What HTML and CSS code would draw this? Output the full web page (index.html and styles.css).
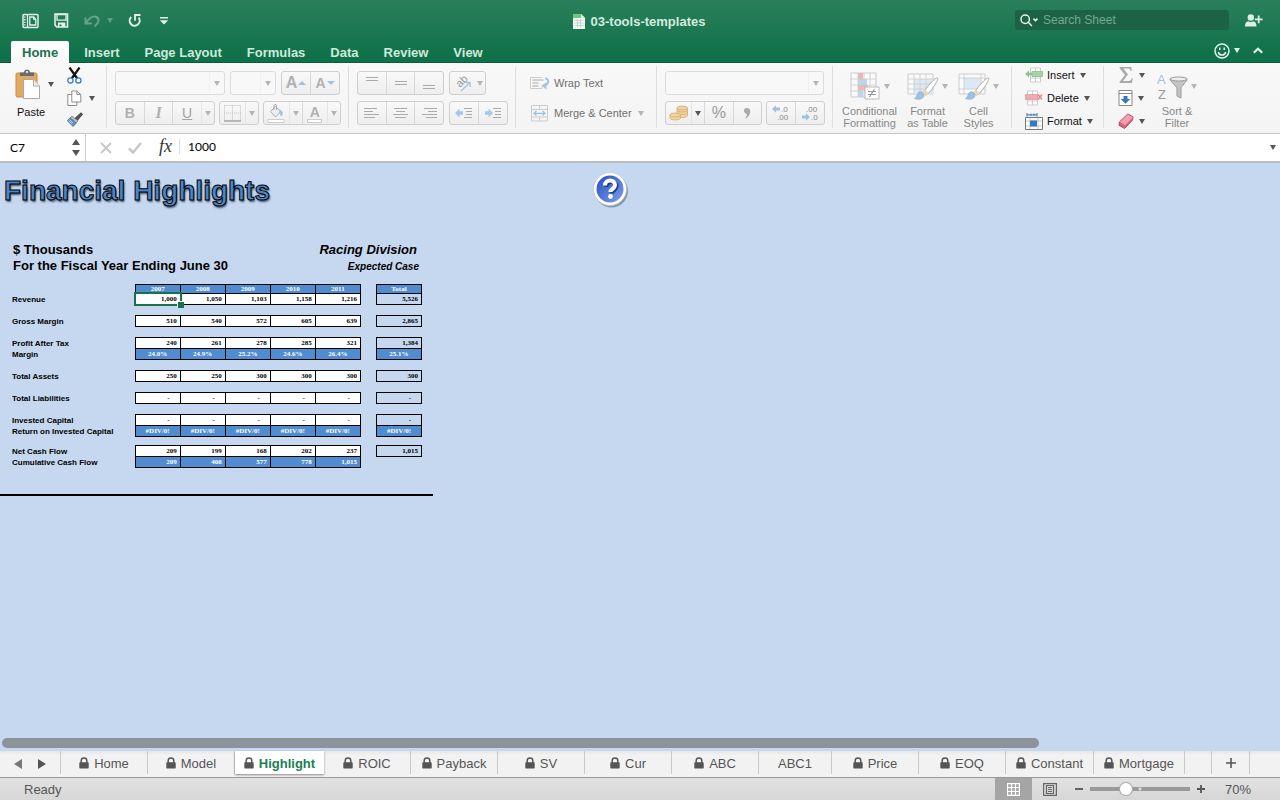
FILE: index.html
```html
<!DOCTYPE html>
<html lang="en">
<head>
<meta charset="utf-8">
<title>03-tools-templates</title>
<link rel="stylesheet" href="styles.css">
</head>
<body>
<header class="top">
  <div class="titlebar">
    <div class="quick">
      <button class="plain" aria-label="New from template"><svg width="17" height="16" viewBox="0 0 17 16" fill="none" stroke="#e3f1ea" stroke-width="1.5"><rect x="1" y="1.5" width="15" height="13" rx="1"/><path d="M5.500 2v12M7.800 12V4h4l2 2.300V12z" stroke-width="1.300"/><path d="M2.800 3.500v9" stroke-dasharray="1.300 1.300"/><path d="M11.500 4v2.600h2.500" stroke-width="1"/></svg></button>
      <button class="plain" aria-label="Save"><svg width="15" height="15" viewBox="0 0 15 15"><path d="M1 1h12.500v13H2.800L1 12.200z" fill="none" stroke="#e3f1ea" stroke-width="1.600"/><path d="M3 1.500h9v5.700H3z" fill="none" stroke="#e3f1ea" stroke-width="1.300"/><path d="M3.800 9.500h7.500V14H7.500v-2.500h-2V14H3.800z" fill="#e3f1ea"/></svg></button>
      <button class="plain undo" aria-label="Undo"><svg width="17" height="14" viewBox="0 0 17 14" fill="none" stroke="#66a487" stroke-width="2"><path d="M1.500 3.500v6h6.500M2 9C5 4.500 8.500 1.800 12 2.800c4 1.500 3 6-1.500 9.700"/></svg><span class="caret faint"></span></button>
      <button class="plain" aria-label="Repeat"><svg width="14" height="15" viewBox="0 0 14 15" fill="none" stroke="#e3f1ea" stroke-width="2"><path d="M3.300 4a5 5 0 1 0 7.300.6"/><path d="M7 7.800V2h5.500" stroke-width="1.800"/></svg></button>
      <button class="plain" aria-label="Customize toolbar"><svg width="10" height="8" viewBox="0 0 10 8" fill="#e3f1ea"><path d="M1 0h8v1.500H1zM.8 3.300h8.400L5 7.600z"/></svg></button>
    </div>
    <h1 class="doc"><svg width="12" height="15" viewBox="0 0 12 15"><path d="M0 0h8l4 4v11H0z" fill="#f4faf6"/><path d="M0 0h8l1 4H0z" fill="#72c487"/><path d="M8 0v4h4z" fill="#d6efe0"/><path d="M1.500 6.500h9M1.500 9h9M1.500 11.500h9M4.500 5v9M7.500 5v9" stroke="#b4c9bd" stroke-width=".7"/></svg>03-tools-templates</h1>
    <div class="right">
      <label class="search"><svg width="19" height="13" viewBox="0 0 19 13" fill="none" stroke="#e7f3ed" stroke-width="1.500"><circle cx="5.200" cy="5.200" r="4.200"/><path d="M8.300 8.300l3.600 3.700M13.500 4.600l2 2 2-2"/></svg><input type="text" placeholder="Search Sheet" aria-label="Search Sheet"></label>
      <button class="plain" aria-label="Share"><svg width="18" height="14" viewBox="0 0 18 14" fill="#dcefe5"><circle cx="5.800" cy="3.500" r="3.200"/><path d="M0 12.500c0-3.500 1-4.800 3.500-5.200l2.300 1 2.300-1c2.400.4 3.400 1.700 3.400 5.200z"/><path d="M12.800 1.500h1.800v3h3v1.800h-3v3h-1.800v-3h-3V4.500h3z"/></svg></button>
    </div>
  </div>
  <nav class="tabs">
    <button class="tab on">Home</button><button class="tab">Insert</button><button class="tab">Page Layout</button><button class="tab">Formulas</button><button class="tab">Data</button><button class="tab">Review</button><button class="tab">View</button>
    <div class="tabtools">
      <button class="plain" aria-label="Feedback"><svg width="16" height="16" viewBox="0 0 16 16" fill="none" stroke="#e3f1ea" stroke-width="1.500"><circle cx="8" cy="8" r="7"/><path d="M4.300 9c.7 4 6.700 4 7.400 0M5.800 4.500v2.500M10.200 4.500v2.500"/></svg><span class="caret light"></span></button>
      <button class="plain" aria-label="Collapse ribbon"><svg width="10" height="7" viewBox="0 0 10 7" fill="none" stroke="#e3f1ea" stroke-width="2.200"><path d="M.8 5.800L5 1.800l4.200 4"/></svg></button>
    </div>
  </nav>
</header>

<section class="ribbon" aria-label="Home">
  <div class="group clip">
    <button class="paste"><span class="pic"><svg width="26" height="31" viewBox="0 0 26 31"><rect x="1" y="4" width="21" height="24" rx="1.500" fill="#e2a95f" stroke="#c68d45"/><path d="M5 7V3.500h4C9-.5 15-.5 15 3.500h4V7z" fill="#6b6b6b"/><circle cx="12" cy="3" r="1.200" fill="#ddd"/><path d="M8.500 10.500h10l6 6.500v12.500h-16z" fill="#fff" stroke="#aaa"/><path d="M18.500 10.500V17h6" fill="#eee" stroke="#aaa"/></svg><span class="caret dark"></span></span>Paste</button>
    <div class="clipsmall">
      <button class="plain" aria-label="Cut"><svg width="15" height="17" viewBox="0 0 15 17" fill="none"><path d="M2.500.5l7.800 11M12.500.5L4.700 11.500" stroke="#111" stroke-width="2.200"/><circle cx="3.400" cy="13.400" r="2.600" stroke="#3b7fc4" stroke-width="1.300"/><circle cx="11.400" cy="13.400" r="2.600" stroke="#3b7fc4" stroke-width="1.300"/></svg></button>
      <button class="plain wide" aria-label="Copy"><svg width="15" height="17" viewBox="0 0 15 17" fill="#fff" stroke="#8d8d8d"><path d="M.8 4.500h9v11h-9z"/><path d="M4.800 1h5l4 3.500v7.500h-9z"/><path d="M9.800 1v3.500h4" fill="none"/></svg><span class="caret dark"></span></button>
      <button class="plain" aria-label="Format painter"><svg width="16" height="15" viewBox="0 0 16 15"><path d="M14 .8l1.500 1.400-5 6-2.400-2z" fill="#555" stroke="#444"/><path d="M5 4l6 5-2 2L3 6z" fill="#bbb" stroke="#777" stroke-width=".7"/><path d="M3 6l6.200 5.200L6 14.500.3 8.500z" fill="#5c93cf" stroke="#315e91" stroke-width=".7"/><path d="M2.500 7.500L6 11M1.500 8.500L5 12" stroke="#b7d2ed"/></svg></button>
    </div>
  </div>

  <div class="group stack">
    <div class="row">
      <span class="combo fontname"><select disabled aria-label="Font"><option></option></select><i class="caret"></i></span>
      <span class="combo fontsize"><select disabled aria-label="Font size"><option></option></select><i class="caret"></i></span>
      <span class="seg two"><button aria-label="Grow font" class="letter">A<i class="up"></i></button><button aria-label="Shrink font" class="letter small">A<i class="down"></i></button></span>
    </div>
    <div class="row">
      <span class="seg biu"><button class="letter small bold">B</button><button class="letter small ital">I</button><button class="letter small under">U</button><button class="drop" aria-label="Underline options"><i class="caret"></i></button></span>
      <span class="seg bord"><button aria-label="Borders"><svg width="17" height="17" viewBox="0 0 17 17" fill="none" stroke="#c0c0c0"><path d="M.5.500h16v15.500M.5.500V16M8.500.500V16M0 8h17" stroke-dasharray="1 1"/><path d="M0 16h17" stroke="#999" stroke-width="1.300"/></svg></button><button class="drop" aria-label="Border options"><i class="caret"></i></button></span>
      <span class="seg fill"><button aria-label="Fill color"><svg width="18" height="19" viewBox="0 0 18 19"><path d="M3.500 7.500l5-5 5.500 5-5.500 5.500z" fill="#eee" stroke="#aaa"/><path d="M7 6V1.500C7 0 9.500 0 9.500 1.500V6" fill="none" stroke="#aaa"/><path d="M13 6c3 1.500 2.500 4 1.300 6-1-1.500-1.800-3-1.300-6z" fill="#9cc3e4" stroke="#9cc3e4"/><path d="M1 15.500h16v3H1z" fill="#fff" stroke="#ccc"/></svg></button><button class="drop" aria-label="Fill options"><i class="caret"></i></button><button class="letter small fc">A<i class="bar"></i></button><button class="drop" aria-label="Font color options"><i class="caret"></i></button></span>
    </div>
  </div>

  <div class="group stack">
    <div class="row">
      <span class="seg three"><button aria-label="Align top"><svg class="ln" width="14" height="16" viewBox="0 0 14 16"><path d="M1 2.500h12M1 5.500h12"/></svg></button><button aria-label="Align middle"><svg class="ln" width="14" height="16" viewBox="0 0 14 16"><path d="M1 6.500h12M1 9.500h12"/></svg></button><button aria-label="Align bottom"><svg class="ln" width="14" height="16" viewBox="0 0 14 16"><path d="M1 10.500h12M1 13.500h12"/></svg></button></span>
      <span class="seg orient"><button aria-label="Orientation"><svg class="over" width="18" height="20" viewBox="0 0 18 20"><text x="0" y="0" transform="translate(7 15) rotate(-45)" class="ab">ab</text><path d="M8 18l9-8.500M12.500 9.500H17V14" fill="none" stroke="#9fc4e4" stroke-width="1.300"/></svg><i class="caret"></i></button></span>
    </div>
    <div class="row">
      <span class="seg three"><button aria-label="Align left"><svg class="ln" width="15" height="12" viewBox="0 0 15 12"><path d="M0 1.500h13M0 4.500h9M0 7.500h15M0 10.500h11"/></svg></button><button aria-label="Center"><svg class="ln" width="15" height="12" viewBox="0 0 15 12"><path d="M1 1.500h13M3 4.500h9M0 7.500h15M2 10.500h11"/></svg></button><button aria-label="Align right"><svg class="ln" width="15" height="12" viewBox="0 0 15 12"><path d="M2 1.500h13M6 4.500h9M0 7.500h15M4 10.500h11"/></svg></button></span>
      <span class="seg two"><button aria-label="Decrease indent"><svg class="ln" width="18" height="12" viewBox="0 0 18 12"><path d="M9 1.500h8M11 4.500h6M11 7.500h6M9 10.500h8"/><path class="blue" d="M0 6l4.500-4.500v2.700H8v3.600H4.500v2.700z"/></svg></button><button aria-label="Increase indent"><svg class="ln" width="18" height="12" viewBox="0 0 18 12"><path d="M9 1.500h8M11 4.500h6M11 7.500h6M9 10.500h8"/><path class="blue" d="M9 6L4.500 1.500v2.700H1v3.600h3.500v2.700z"/></svg></button></span>
    </div>
  </div>

  <div class="group stack texts">
    <button class="textbtn"><svg width="20" height="14" viewBox="0 0 20 14" fill="none" stroke="#aaa"><path d="M12 1.500H.5v11h11.500V10" stroke="#ccc"/><path d="M2.500 4h11M2.500 7h6M2.500 10h6"/><path d="M15 2.500c4.500 0 4.500 6-1 7" stroke="#a3c6e5" stroke-width="2"/><path d="M16.500 6v7.500L11.500 9.800z" fill="#a3c6e5" stroke="none"/></svg>Wrap Text</button>
    <button class="textbtn"><svg width="20" height="17" viewBox="0 0 20 17" fill="none" stroke="#ccc"><path d="M1.500.500h16v15.500h-16zM1.500 4.500h16M1.500 12h16M9.500.500v4M9.500 12v4"/><path d="M4.500 8.300h10M6.500 6l-2.500 2.300 2.500 2.300M12.500 6L15 8.300l-2.500 2.300" stroke="#9cc3e4" stroke-width="1.300"/></svg>Merge &amp; Center<i class="caret"></i></button>
  </div>

  <div class="group stack">
    <div class="row"><span class="combo numfmt"><select disabled aria-label="Number format"><option></option></select><i class="caret"></i></span></div>
    <div class="row">
      <span class="seg num"><button class="coin" aria-label="Currency"><svg width="20" height="16" viewBox="0 0 20 16" fill="#f1d4a0" stroke="#d6b072" stroke-width=".9"><path d="M8 3v8c2 2 8 2 10.500 0V3z"/><path d="M8 5.500c2 2 8 2 10.500 0M8 8c2 2 8 2 10.500 0"/><ellipse cx="13.200" cy="3" rx="5.300" ry="2"/><path d="M1 10v3.300c2 2.200 8 2.200 10.500 0V10z"/><ellipse cx="6.200" cy="10" rx="5.300" ry="2"/></svg></button><button class="drop" aria-label="Currency options"><i class="caret dark"></i></button><button class="letter pct">%</button><button aria-label="Comma style"><svg width="9" height="13" viewBox="0 0 9 13"><path d="M1.500 2c1-1.800 6-1.300 5.800 2.500C7 8 5 10.500 2 12c1.500-2.500 2-3.500 1.800-5C2 6.500 0 4.500 1.500 2z" fill="#aaa"/></svg></button></span>
      <span class="seg two"><button aria-label="Increase decimal"><svg width="19" height="18" viewBox="0 0 19 18"><text class="dec" x="9" y="8">.0</text><text class="dec" x="5" y="16">.00</text><path d="M0 5l4-3.700v2.200h4v3H4v2.200z" fill="#9cc3e4"/></svg></button><button aria-label="Decrease decimal"><svg width="19" height="18" viewBox="0 0 19 18"><text class="dec" x="5" y="8">.00</text><text class="dec" x="10" y="16">.0</text><path d="M9 13L5 9.300v2.200H1v3h4v2.200z" fill="#9cc3e4"/></svg></button></span>
    </div>
  </div>

  <div class="group styles">
    <button class="big"><span class="pic"><svg width="31" height="29" viewBox="0 0 31 29"><path d="M1 1h25v24H1z" fill="#fafafa" stroke="#ccc"/><path d="M8 1h5v6H8zM8 13h10v5H8z" fill="#efb5b7"/><path d="M8 7h9v6H8zM8 18h5v7H8z" fill="#b9d7ee"/><path d="M1 7h25M1 13h25M1 19h25M8 1v24M14 1v24M20 1v24" stroke="#ccc" stroke-width=".8"/><path d="M15 15h14v12H15z" fill="#fff" stroke="#bbb"/><path d="M18 19.500h8M18 22.500h8M24.500 17l-5 8" stroke="#999" stroke-width="1.200"/></svg><i class="caret"></i></span>Conditional<br>Formatting</button>
    <button class="big"><span class="pic"><svg width="32" height="29" viewBox="0 0 32 29"><path d="M1 2h25v20H1z" fill="#fafafa" stroke="#ccc"/><path d="M7 7h19v15H7z" fill="#dce9f5"/><path d="M1 7h25M1 12h25M1 17h25M7 2v20M13 2v20M19 2v20" stroke="#ccc" stroke-width=".8"/><path d="M30.500 6c2 1-7 14-10 16l-3-2.500C19 16 28 5 30.500 6z" fill="#fff" stroke="#aaa"/><path d="M17.500 17.500l4 3.500-3 3.500-4-3.500z" fill="#ead7b4"/><path d="M12 20c3-1 6 2 4.500 5-2 3-7 2.500-9 1.500 3-1.500 2-5 4.500-6.500z" fill="#9cc2e2" stroke="#7fabd1" stroke-width=".6"/></svg><i class="caret"></i></span>Format<br>as Table</button>
    <button class="big"><span class="pic"><svg width="32" height="29" viewBox="0 0 32 29"><path d="M1 2h26v20H1z" fill="#fafafa" stroke="#ccc"/><path d="M6 6h17v11H6z" fill="#dce9f5"/><path d="M1 6h26M1 17h26M6 2v20M23 2v20" stroke="#ccc" stroke-width=".8"/><path d="M30.500 6c2 1-7 14-10 16l-3-2.500C19 16 28 5 30.500 6z" fill="#fff" stroke="#aaa"/><path d="M17.500 17.500l4 3.500-3 3.500-4-3.500z" fill="#ead7b4"/><path d="M12 20c3-1 6 2 4.500 5-2 3-7 2.500-9 1.500 3-1.500 2-5 4.500-6.500z" fill="#9cc2e2" stroke="#7fabd1" stroke-width=".6"/></svg><i class="caret"></i></span>Cell<br>Styles</button>
  </div>

  <div class="group cells">
    <button class="line"><svg width="18" height="16" viewBox="0 0 18 16"><path d="M5.500 1h10v14h-10zM10.500 1v14M5.500 11h10" fill="#fff" stroke="#ccc"/><path d="M7 4.500h10.500v5H7z" fill="#a5d3a6" stroke="#86b988" stroke-width=".7"/><path d="M0 7l4-3.500v2.300h3v2.400H4v2.300z" fill="#8fc492"/></svg>Insert<i class="caret dark"></i></button>
    <button class="line"><svg width="18" height="16" viewBox="0 0 18 16"><path d="M2.500 1h10v14h-10zM7.500 1v14M2.500 11h10" fill="#fff" stroke="#ccc"/><path d="M.5 4.500h12v5H.5z" fill="#efabaf" stroke="#d99" stroke-width=".7"/><path d="M13 4.500l4 5M17 4.500l-4 5" stroke="#e8888e" stroke-width="1.500"/></svg>Delete<i class="caret dark"></i></button>
    <button class="line"><svg width="18" height="17" viewBox="0 0 18 17"><path d="M.5 4.500h17v12H.5z" fill="#fff" stroke="#777"/><path d="M5 5v11M13 5v11M1 8h16M1 13h16" stroke="#bbb" stroke-width=".8"/><path d="M5 7.500h7v6H5z" fill="#3478bd"/><path d="M2 1.800h10M2 0v3.500M12 0v3.500M6 .5v2.500M9 .5v2.500" stroke="#4b8bc9" stroke-width="1.200"/></svg>Format<i class="caret dark"></i></button>
  </div>

  <div class="group edit">
    <div class="editcol">
      <button class="line" aria-label="AutoSum"><svg width="16" height="16" viewBox="0 0 15 16"><path d="M1 0h12v4h-1c0-2-1-2.500-3-2.500H5l4.500 6L4.500 14H10c2 0 3-1 3.200-3h1l-.7 5H1v-1l5.500-7L1 1z" fill="#aaa"/></svg><i class="caret dark"></i></button>
      <button class="line" aria-label="Fill"><svg width="15" height="17" viewBox="0 0 15 17"><path d="M1 .5h13v15H1z" fill="#fff" stroke="#888"/><path d="M1 3.500h13" stroke="#888"/><path d="M5.500 6h4v3h2.800L7.500 13.800 2.700 9h2.800z" fill="#3279c0"/></svg><i class="caret dark"></i></button>
      <button class="line" aria-label="Clear"><svg width="16" height="16" viewBox="0 0 17 17"><path d="M10.500 1l5.500 3-.5 3.500-8.500 9-6-3.500.5-3.500z" fill="#d9627e" stroke="#b84361"/><path d="M10.500 1.500L16 4.500l-8.500 8.500-5.500-3.500z" fill="#f3a0b3"/></svg><i class="caret dark"></i></button>
    </div>
    <button class="big sort"><span class="pic"><svg class="over" width="31" height="32" viewBox="0 0 31 32"><text class="sa" x="0" y="13">A</text><text class="sz" x="1" y="28">Z</text><path d="M13 8c0 2 7 8 7 9v8l4 2V17c0-1 6-7 6-9z" fill="#c4c4c4" stroke="#999"/><ellipse cx="21.500" cy="8" rx="8.500" ry="2" fill="#eee" stroke="#999"/></svg><i class="caret"></i></span>Sort &amp;<br>Filter</button>
  </div>
</section>

<div class="formula">
  <div class="name"><input value="C7" aria-label="Name box"><span class="spin"><i class="tri-up"></i><i class="tri-down"></i></span></div>
  <button class="plain" aria-label="Cancel"><svg width="12" height="12" viewBox="0 0 12 12" stroke="#c8c8c8" stroke-width="2"><path d="M1 1l10 10M11 1L1 11"/></svg></button>
  <button class="plain" aria-label="Enter"><svg width="14" height="12" viewBox="0 0 14 12" fill="none" stroke="#c8c8c8" stroke-width="2.500"><path d="M1 6.500L5 10.500 13 1"/></svg></button>
  <button class="plain fx">fx</button>
  <input class="fvalue" value="1000" aria-label="Formula bar">
  <i class="caret dark"></i>
</div>

<main class="sheet">
  <div class="banner"><h2>Financial Highlights</h2>
    <button class="plain" aria-label="Help"><svg width="38" height="38" viewBox="0 0 38 38"><defs><linearGradient id="orb" x1="0" y1="0" x2="1" y2="1"><stop offset="0" stop-color="#2450bd"/><stop offset="1" stop-color="#7f9df0"/></linearGradient></defs><circle cx="19.500" cy="20" r="16.500" fill="#64748e" opacity=".65"/><circle cx="18" cy="18" r="16.500" fill="#fff" stroke="#b9c3d3" stroke-width=".7"/><circle cx="18" cy="18" r="13.500" fill="url(#orb)"/><g fill="none" stroke-width="4"><path d="M13.500 15c0-6.500 10-6.500 10-.5 0 4-4.500 3.500-4.500 7" stroke="#263d80" transform="translate(1 1)"/><path d="M13 14.500c0-6.500 10-6.500 10-.5 0 4-4.500 3.500-4.500 7" stroke="#fff"/></g><circle cx="18.500" cy="25.500" r="2.400" fill="#fff"/></svg></button>
  </div>
  <div class="report">
    <div class="heads"><div class="big1"><span>$ Thousands</span><em>Racing Division</em></div><div class="big1"><span>For the Fiscal Year Ending June 30</span><em class="case">Expected Case</em></div></div>
    <table>
      <colgroup><col class="lab"><col class="c"><col class="c"><col class="c"><col class="c"><col class="c"><col class="sp"><col class="c"></colgroup>
      <tr class="head"><td></td><th>2007</th><th>2008</th><th>2009</th><th>2010</th><th>2011</th><td></td><th>Total</th></tr>
      <tr class="v"><th scope="row">Revenue</th><td class="sel">1,000</td><td>1,050</td><td>1,103</td><td>1,158</td><td>1,216</td><td></td><td>5,526</td></tr>
      <tr class="gap"><td colspan="8"></td></tr>
      <tr class="v"><th scope="row">Gross Margin</th><td>510</td><td>540</td><td>572</td><td>605</td><td>639</td><td></td><td>2,865</td></tr>
      <tr class="gap"><td colspan="8"></td></tr>
      <tr class="v"><th scope="row">Profit After Tax</th><td>240</td><td>261</td><td>278</td><td>285</td><td>321</td><td></td><td>1,384</td></tr>
      <tr class="v p"><th scope="row">Margin</th><td>24.0%</td><td>24.9%</td><td>25.2%</td><td>24.6%</td><td>26.4%</td><td></td><td>25.1%</td></tr>
      <tr class="gap"><td colspan="8"></td></tr>
      <tr class="v"><th scope="row">Total Assets</th><td>250</td><td>250</td><td>300</td><td>300</td><td>300</td><td></td><td>300</td></tr>
      <tr class="gap"><td colspan="8"></td></tr>
      <tr class="v dash"><th scope="row">Total Liabilities</th><td>-</td><td>-</td><td>-</td><td>-</td><td>-</td><td></td><td>-</td></tr>
      <tr class="gap"><td colspan="8"></td></tr>
      <tr class="v dash"><th scope="row">Invested Capital</th><td>-</td><td>-</td><td>-</td><td>-</td><td>-</td><td></td><td>-</td></tr>
      <tr class="v p"><th scope="row">Return on Invested Capital</th><td>#DIV/0!</td><td>#DIV/0!</td><td>#DIV/0!</td><td>#DIV/0!</td><td>#DIV/0!</td><td></td><td>#DIV/0!</td></tr>
      <tr class="gap short"><td colspan="8"></td></tr>
      <tr class="v"><th scope="row">Net Cash Flow</th><td>209</td><td>199</td><td>168</td><td>202</td><td>237</td><td></td><td>1,015</td></tr>
      <tr class="v cum"><th scope="row">Cumulative Cash Flow</th><td>209</td><td>408</td><td>577</td><td>778</td><td>1,015</td></tr>
    </table>
  </div>
  <div class="scroll"></div>
</main>

<svg width="0" height="0" class="defs"><symbol id="lock" viewBox="0 0 10 12"><path d="M2.200 6V3.500c0-3.500 5.600-3.500 5.600 0V6" fill="none" stroke="#555" stroke-width="1.500"/><rect x=".3" y="5.300" width="9.400" height="6.200" rx=".8" fill="#555"/></symbol></svg>
<nav class="sheets">
  <div class="arrows"><button class="plain" aria-label="Previous sheet"><i class="lt"></i></button><button class="plain" aria-label="Next sheet"><i class="gt"></i></button></div>
  <button><svg><use href="#lock"/></svg>Home</button><button><svg><use href="#lock"/></svg>Model</button><button class="cur"><svg><use href="#lock"/></svg>Highlight</button><button><svg><use href="#lock"/></svg>ROIC</button><button><svg><use href="#lock"/></svg>Payback</button><button><svg><use href="#lock"/></svg>SV</button><button><svg><use href="#lock"/></svg>Cur</button><button><svg><use href="#lock"/></svg>ABC</button><button class="nolock">ABC1</button><button><svg><use href="#lock"/></svg>Price</button><button><svg><use href="#lock"/></svg>EOQ</button><button class="mid"><svg><use href="#lock"/></svg>Constant</button><button class="long"><svg><use href="#lock"/></svg>Mortgage</button><span class="blank"></span><button class="add" aria-label="Add sheet"><svg class="plus" viewBox="0 0 10 10"><path d="M0 5h10M5 0v10" stroke="#555" stroke-width="1.600"/></svg></button>
</nav>
<footer class="status">
  <span class="ready">Ready</span>
  <button class="view on" aria-label="Normal view"><svg width="13" height="13" viewBox="0 0 13 13" fill="none" stroke="#fff" stroke-width="1.200"><path d="M.6.600h11.800v11.800H.6zM4.500.600v11.800M8.500.600v11.800M.6 4.500h11.800M.6 8.500h11.800"/></svg></button>
  <button class="view" aria-label="Page layout view"><svg width="14" height="13" viewBox="0 0 14 13" fill="none" stroke="#666" stroke-width="1.200"><path d="M.6.600h12.800v11.800H.6zM3.500 2.500h7v8h-7zM5 4.500h4M5 6.500h4M5 8.500h4"/></svg></button>
  <button class="plain" aria-label="Zoom out"><svg width="8" height="8" viewBox="0 0 8 8"><path d="M0 4h8" stroke="#555" stroke-width="1.800"/></svg></button>
  <input type="range" class="zoom" min="0" max="100" value="34" aria-label="Zoom">
  <button class="plain" aria-label="Zoom in"><svg width="8" height="8" viewBox="0 0 8 8"><path d="M0 4h8M4 0v8" stroke="#555" stroke-width="1.800"/></svg></button>
  <span class="percent">70%</span>
</footer>
</body>
</html>
```
FILE: styles.css
```css
* { box-sizing: border-box; }
body { margin: 0; min-height: 100vh; display: flex; flex-direction: column; font-family: "Liberation Sans", Arial, sans-serif; font-size: 13px; color: #555; overflow: hidden; }
button { font: inherit; color: inherit; background: none; border: 0; padding: 0; margin: 0; }
svg { display: block; flex: none; }
svg.over { overflow: visible; }
.defs { position: absolute; }
.plain { display: flex; align-items: center; }

.caret { display: block; flex: none; width: 0; height: 0; border: 3px solid transparent; border-top: 5px solid #b5b5b5; border-bottom: 0; }
.caret.dark { border-top-color: #555; }
.caret.light { border-top-color: #e3f1ea; }
.caret.faint { border-top-color: #5d9f80; }

.top { background: linear-gradient(#2a805b, #0f7149 90%); border-bottom: 1px solid #0a5c3a; height: 63px; }
.titlebar { display: grid; grid-template-columns: 1fr auto 1fr; align-items: center; height: 41px; }
.quick { display: flex; align-items: center; padding-left: 22px; gap: 15px; }
.undo { gap: 6px; }
.quick .plain:last-child { margin-left: 2px; }
.doc { display: flex; align-items: center; gap: 6px; margin: 0; font-size: 13px; color: #d5ebe0; padding: 1px 2px 0 0; }
.right { display: flex; justify-content: flex-end; align-items: center; gap: 16px; padding-right: 17px; }
.search { display: flex; align-items: center; gap: 4px; width: 214px; height: 20px; margin-top: -1px; padding-left: 5px; border-radius: 3px; background: #1c6345; }
.search input { flex: 1; min-width: 0; border: 0; padding: 0; background: none; font: 12px "Liberation Sans", Arial, sans-serif; color: #fff; outline: 0; }
.search input::placeholder { color: #76a88f; opacity: 1; }
.tabs { display: flex; padding-left: 11px; height: 22px; gap: 1px; }
.tab { padding: 0 12px; font-weight: bold; color: #cfe8dc; }
.tab.on { padding: 0 11px; margin-right: 2px; background: linear-gradient(#fff, #f7f7f7); color: #1b734c; border-radius: 2px 2px 0 0; }
.tabtools { display: flex; align-items: center; gap: 13px; margin-left: auto; padding: 0 17px 3px 0; }
.tabtools .plain { gap: 4px; }

.ribbon { display: flex; height: 71px; background: linear-gradient(#f8f8f8, #f4f4f4); border-bottom: 1px solid #c6c6c6; font-size: 11px; }
.group { display: flex; margin: 3px 0 5px; padding: 0 8px; border-right: 1px solid #dedede; }
.group.clip { width: 107px; padding: 3px 0 0 14px; color: #111; gap: 14px; }
.paste { display: flex; flex-direction: column; align-items: flex-start; width: 39px; padding: 0 0 0 1px; text-indent: 2px; line-height: 14px; gap: 5px; height: 54px; }
.paste .pic { display: flex; align-items: center; gap: 7px; }
.clipsmall { display: flex; flex-direction: column; justify-content: space-between; height: 60px; margin-top: -2px; }
.clipsmall .wide { gap: 7px; }
.stack { flex-direction: column; padding: 5px 7px 0 8px; gap: 6px; }
.row { display: flex; gap: 5px; }
.seg { display: flex; height: 24px; border: 1px solid #cfcfcf; border-radius: 3px; background: linear-gradient(#f9f9f9, #eee); }
.seg button { display: flex; align-items: center; justify-content: center; flex: 1; border-left: 1px solid #d8d8d8; }
.seg button:first-child { border-left: 0; }
.seg .drop { flex: 0 0 13px; border-left-color: #e4e4e4; }
.seg.two { width: 59px; }
.seg.three { width: 87px; }
.seg.biu { width: 100px; }
.seg.bord { width: 40px; margin-left: -1px; }
.seg.fill { width: 78px; margin-left: -1px; }
.seg.orient { width: 37px; }
.seg.orient button { gap: 6px; }
.seg.num { width: 97px; margin-right: -1px; }
.seg .coin { flex: 0 0 25px; }
.letter { font-size: 16px; font-weight: bold; color: #b0b0b0; gap: 1px; }
.letter.small { font-size: 14px; }
.ital { font-family: "Liberation Serif", serif; font-style: italic; }
.letter.small.ital { font-size: 16px; }
.under { text-decoration: underline; font-weight: normal; color: #a2a2a2; }
.fc { position: relative; padding-bottom: 3px; }
.bar { position: absolute; bottom: 1px; width: 15px; height: 4px; background: #fff; border: 1px solid #ccc; }
.up, .down { width: 0; height: 0; border: 4px solid transparent; }
.up { border-bottom: 4px solid #9cc3e4; border-top: 0; }
.down { border-top: 4px solid #9cc3e4; border-bottom: 0; }
.combo { display: flex; align-items: center; height: 24px; border: 1px solid #dcdcdc; border-radius: 3px; padding-right: 4px; background: #f8f8f8; }
.combo select { flex: 1; min-width: 0; height: 20px; margin-right: 4px; appearance: none; background: none; border: 0; border-right: 1px solid #ececec; }
.fontname { width: 110px; }
.fontsize { width: 46px; }
.numfmt { width: 159px; }
.ln { fill: none; stroke: #aaa; stroke-width: 1; }
.blue { fill: #a3c8e8; stroke: none; }
.ab { font: 11px "Liberation Sans", Arial, sans-serif; fill: #999; }
.dec { font: 8px "Liberation Sans", Arial, sans-serif; fill: #888; }
.pct { font-size: 16px; font-weight: normal; color: #999; }
.texts { width: 141px; padding-left: 14px; }
.textbtn { display: flex; align-items: center; height: 24px; gap: 4px; color: #707070; white-space: nowrap; }
.textbtn .caret { margin-left: 2px; }
.big { display: flex; flex-direction: column; align-items: center; line-height: 12px; color: #888; }
.big .pic { display: flex; align-items: center; gap: 3px; height: 29px; margin: 6px 0 4px; }
.styles { width: 179px; padding: 0 0 0 9px; gap: 10px; }
.cells { flex-direction: column; width: 92px; padding: 0 0 0 13px; color: #111; gap: 5px; }
.line { display: flex; flex: none; align-items: center; height: 18px; gap: 4px; }
.line .caret { margin-left: 1px; }
.edit { padding: 0 0 0 14px; gap: 12px; border-right: 0; }
.editcol { display: flex; flex-direction: column; gap: 5px; }
.sa, .sz { font: 13px "Liberation Sans", Arial, sans-serif; fill: #9cc3e4; }
.sz { fill: #999; }

.formula { display: flex; align-items: center; height: 29px; background: #fff; border-bottom: 2px solid #b9bcc2; padding-right: 4px; }
.formula input { font: 12px Lato, sans-serif; border: 0; padding: 0; color: #000; background: none; outline: 0; }
.name { display: flex; align-items: center; align-self: stretch; width: 86px; padding: 0 5px 0 10px; border-right: 1px solid #ccc; margin-right: 14px; }
.name input { flex: 1; min-width: 0; }
.spin { display: flex; flex-direction: column; gap: 5px; }
.tri-up, .tri-down { border: 4px solid transparent; }
.tri-up { border-bottom: 6px solid #555; border-top: 0; }
.tri-down { border-top: 6px solid #555; border-bottom: 0; }
.formula .plain { margin-right: 16px; }
.formula .fx { font: italic 18px "Liberation Serif", serif; color: #333; margin: 0 7px 2px 1px; }
.formula .fvalue { flex: 1; min-width: 0; padding-left: 8px; border-left: 1px solid #ddd; height: 15px; margin-bottom: 2px; }

.sheet { flex: 1; display: flex; flex-direction: column; background: #c5d8ef; color: #000; }
.banner { display: flex; align-items: center; padding: 7px 0 0 4px; height: 47px; }
.banner h2 { margin: 0; padding-top: 2px; width: 588px; font-size: 28px; line-height: 34px; color: #4a86cb; -webkit-text-stroke: 1px #000; text-shadow: 1px 2px 2px #44546a; }
.report { width: 433px; border-bottom: 2px solid #000; padding: 32px 11px 26px 12px; }
.heads { padding: 0 3px 0 1px; margin-bottom: 10px; }
.big1 { display: flex; justify-content: space-between; height: 16px; font-weight: bold; font-size: 13px; line-height: 16px; }
.big1 em { padding-right: 2px; }
.big1 .case { font-size: 10px; line-height: 18px; padding: 0; }
table { border-collapse: collapse; table-layout: fixed; width: 410px; font: bold 7px "Liberation Serif", serif; }
.lab { width: 123px; }
.c { width: 45px; }
.sp { width: 16px; }
td, th { padding: 0; height: 11px; line-height: 10px; overflow: hidden; white-space: nowrap; }
.head td, .head th { height: 9px; line-height: 8px; }
.head th { background: #4f8dd0; color: #fff; border: 1px solid #000; text-align: center; }
.v th { padding-top: 1px; font: bold 8px/10px "Liberation Sans", Arial, sans-serif; text-align: left; }
.v td { border: 1px solid #000; background: #fff; text-align: right; padding: 1px 3px 0 0; line-height: 9px; }
.v td:nth-child(7) { border-top: 0; border-bottom: 0; background: none; }
.v td:nth-child(8) { background: #c5d8ef; }
.dash td { padding-right: 10px; }
.v.p td, .v.p td:nth-child(8), .cum td { background: #4f8dd0; color: #fff; }
.v.p td { text-align: center; padding-right: 0; }
.v.p td:nth-child(7) { background: none; }
.gap.short td { height: 9px; }
.v .sel { position: relative; overflow: visible; }
.sel::before { content: ""; position: absolute; inset: -2px; border: 2px solid #1a7048; }
.sel::after { content: ""; position: absolute; right: -4px; bottom: -4px; width: 6px; height: 6px; background: #1a7048; border: 1px solid #fff; border-width: 1px 0 0 1px; }
.scroll { margin: auto 0 3px 2px; width: 81%; height: 10px; border-radius: 5px; background: #8c939a; }

.sheets { display: flex; height: 27px; background: linear-gradient(#e6e6e6, #f2f2f2 4px); border-bottom: 1px solid #999; align-items: flex-start; }
.sheets button, .arrows, .blank { display: flex; align-items: center; justify-content: center; gap: 5px; height: 23px; padding-top: 2px; }
.sheets > *, .sheets > button { border-right: 1px solid #c8c8c8; }
.sheets > button { flex: 0 0 87px; }
.sheets svg { width: 10px; height: 12px; margin-top: -1px; }
.sheets .plus { height: 10px; }
.arrows { width: 61px; gap: 16px; }
.arrows .plain { padding: 0; }
.lt, .gt { border: 5px solid transparent; }
.lt { border-right: 8px solid #777; border-left: 0; }
.gt { border-left: 8px solid #555; border-right: 0; }
.sheets .cur { flex-basis: 89px; background: #fff; color: #1a7f54; font-weight: bold; border-right: 0; box-shadow: 0 1px 2px #888; }
.sheets .nolock { flex-basis: 73px; }
.sheets .mid { flex-basis: 88px; }
.sheets .long { flex-basis: 91px; }
.blank { width: 27px; }
.sheets .add { flex-basis: 38px; }
.status { display: flex; align-items: center; height: 22px; background: linear-gradient(#e2e2e2, #d6d6d6); padding-right: 29px; }
.ready { margin: 0 auto 0 24px; }
.view { display: flex; align-items: center; justify-content: center; width: 37px; height: 22px; }
.view.on { background: #a5a5a5; }
.view + .plain { margin-left: 6px; }
.zoom { appearance: none; width: 100px; height: 12px; margin: 0 7px; background: radial-gradient(circle at 50% 50%, #ddd 1px, transparent 2px), linear-gradient(#999, #999) center / 100% 4px no-repeat; border-radius: 2px; }
.zoom::-webkit-slider-thumb { appearance: none; width: 12px; height: 12px; border-radius: 50%; background: #fff; box-shadow: 0 0 1px 1px #aaa; }
.percent { margin-left: 20px; }
```
